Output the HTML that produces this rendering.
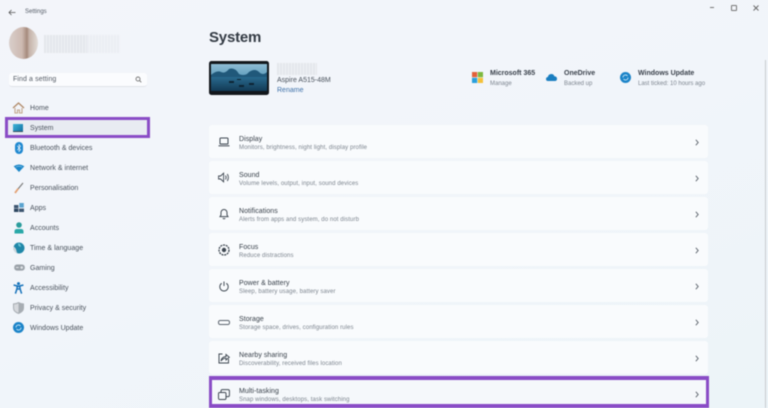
<!DOCTYPE html>
<html lang="en">
<head>
<meta charset="utf-8">
<title>Settings</title>
<style>
html,body{margin:0;padding:0}
body{width:768px;height:408px;overflow:hidden;position:relative;background:linear-gradient(160deg,#f3f5fa 0%,#f1f5fa 50%,#ecf4f8 100%);font-family:"Liberation Sans",sans-serif;color:#333a44}
#w{position:absolute;left:0;top:0;width:768px;height:408px;filter:blur(.5px)}
.t{position:absolute;white-space:nowrap;line-height:10px}
.card{position:absolute;left:209px;width:499px;height:33px;background:#f9fbfd;border-radius:3px}
.ct{font-size:7px;left:239px;color:#38404a;letter-spacing:.05px;margin-top:1px}
.cs{font-size:6px;left:239px;color:#7d858f;letter-spacing:.1px;margin-top:1px}
.nav{font-size:7px;left:30px;color:#4a525c;letter-spacing:.03px;margin-top:1px}
.ic{position:absolute;overflow:visible}
.chev{position:absolute;left:695px;width:4px;height:7px;margin-top:1px}
.box{position:absolute;border-style:solid;border-color:#8a4cc6;box-sizing:border-box}
.blur{position:absolute;background:repeating-linear-gradient(90deg,#e4e7ec 0 2px,#eff1f5 2px 3px)}
</style>
</head>
<body>
<div id="w">
<svg class="ic" style="left:8px;top:9px" width="8" height="7" viewBox="0 0 8 7" fill="none" stroke="#555" stroke-width=".8"><path d="M7.5 3.5H1M3.5 1 1 3.5 3.5 6"/></svg>
<div class="t" style="left:25px;top:7px;font-size:6px;color:#555d67">Settings</div>

<div style="position:absolute;left:9px;top:27px;width:29px;height:32px;border-radius:50%;background:linear-gradient(90deg,#d9cfcb 0%,#cdb9b1 45%,#a58a7c 62%,#c5b3a9 70%,#e2dcd8 100%)"></div>
<div class="blur" style="left:44px;top:35px;width:43px;height:18px"></div>
<div class="blur" style="left:87px;top:35px;width:33px;height:18px;opacity:.55"></div>

<div style="position:absolute;left:9px;top:73px;width:138px;height:13px;background:#fbfcfe;border-radius:3px;border-bottom:1px solid #dfe3e8"></div>
<div class="t" style="left:13px;top:75px;font-size:7px;color:#555c66;letter-spacing:.1px">Find a setting</div>
<svg class="ic" style="left:135px;top:76px" width="7" height="7" viewBox="0 0 7 7" fill="none" stroke="#777" stroke-width=".9"><circle cx="3" cy="3" r="2"/><path d="M4.5 4.5 6.3 6.3"/></svg>

<svg class="ic" style="left:12px;top:102px" width="13" height="12" viewBox="0 0 13 12"><path d="M1 6 6.5 1 12 6" fill="none" stroke="#b08a68" stroke-width="1.3"/><path d="M3 6v5h2.5V8h2v3H10V6" fill="none" stroke="#c2a68c" stroke-width="1.1"/></svg>
<div class="t nav" style="top:103px">Home</div>

<div class="box" style="left:5px;top:117px;width:145px;height:21px;border-width:3px;background:#e8ebf2"></div>
<div style="position:absolute;left:13px;top:124px;width:10px;height:7px;background:linear-gradient(135deg,#3fb5d8,#1473a5);border-bottom:1px solid #33505f"></div>
<div class="t nav" style="top:123px">System</div>

<svg class="ic" style="left:14px;top:142px" width="10" height="12" viewBox="0 0 10 12"><rect x="1" y="0" width="8" height="12" rx="4" fill="#1f88d0"/><path d="M3.2 3.8 6.6 7.8 5 9.5V2.5L6.6 4.2 3.2 8.2" fill="none" stroke="#fff" stroke-width=".6"/></svg>
<div class="t nav" style="top:143px">Bluetooth &amp; devices</div>

<svg class="ic" style="left:13px;top:164px" width="12" height="8" viewBox="0 0 12 9"><path d="M0 2.5Q6-1.5 12 2.5L6 9Z" fill="#1a86c8"/><path d="M2.5 3.5Q6 1.5 9.5 3.5" stroke="#d8eefa" stroke-width=".5" fill="none"/></svg>
<div class="t nav" style="top:163px">Network &amp; internet</div>

<svg class="ic" style="left:14px;top:182px" width="10" height="12" viewBox="0 0 10 12" fill="none"><path d="M9 1 4 7" stroke="#777" stroke-width="1.1"/><path d="M4.2 6.6 1 11" stroke="#e3a072" stroke-width="1.8"/></svg>
<div class="t nav" style="top:183px">Personalisation</div>

<svg class="ic" style="left:14px;top:203px" width="10" height="9" viewBox="0 0 10 9"><rect x="0" y="2" width="4.4" height="3.2" fill="#3d5570"/><rect x="0" y="5.6" width="4.4" height="3.4" fill="#2d4660"/><rect x="5" y="5.6" width="5" height="3.4" fill="#3d5570"/><rect x="5.3" y="0" width="4.5" height="4.6" fill="#5aa3cf"/></svg>
<div class="t nav" style="top:203px">Apps</div>

<svg class="ic" style="left:14px;top:222px" width="10" height="12" viewBox="0 0 10 12"><circle cx="5" cy="3" r="2.8" fill="#2b9c9c"/><path d="M0.5 11.5V9.5Q0.5 7 3 7H7Q9.5 7 9.5 9.5V11.5Z" fill="#29a8a8"/></svg>
<div class="t nav" style="top:223px">Accounts</div>

<svg class="ic" style="left:13px;top:242px" width="12" height="12" viewBox="0 0 12 12"><circle cx="6" cy="6" r="5.5" fill="#1f87a8"/><path d="M0.8 4.5Q3 6 3.5 9T6 11.5Q1 11.5.5 6Z" fill="#cfd6dc"/><path d="M5 1Q8 2 8 5L5.5 4Z" fill="#69c3d5"/></svg>
<div class="t nav" style="top:243px">Time &amp; language</div>

<svg class="ic" style="left:14px;top:264px" width="11" height="7" viewBox="0 0 12 8"><rect x="0" y="0.5" width="12" height="7" rx="3" fill="#9aa1a8"/><circle cx="8.5" cy="4" r="1.5" fill="#dfe3e7"/><rect x="2" y="3.4" width="3" height="1.2" fill="#dfe3e7"/></svg>
<div class="t nav" style="top:263px">Gaming</div>

<svg class="ic" style="left:13px;top:282px" width="11" height="12" viewBox="0 0 11 12"><circle cx="5.5" cy="1.6" r="1.5" fill="#1572ba"/><path d="M.6 3 5.5 4.4 10.4 3M4.3 4.4 3.9 7 2.4 11.6M6.7 4.4 7.1 7 8.6 11.6M4 7H7" fill="none" stroke="#1572ba" stroke-width="1.5"/></svg>
<div class="t nav" style="top:283px">Accessibility</div>

<svg class="ic" style="left:13px;top:302px" width="11" height="12" viewBox="0 0 11 12"><path d="M5.5 0Q8 1.5 11 1.5V6Q11 10 5.5 12 0 10 0 6V1.5Q3 1.5 5.5 0Z" fill="#a7adb3"/><path d="M5.5 1.2V10.8Q1 9.2 1 6V2.4Q3.5 2.4 5.5 1.2Z" fill="#d5d8dc"/></svg>
<div class="t nav" style="top:303px">Privacy &amp; security</div>

<svg class="ic" style="left:13px;top:322px" width="11" height="11" viewBox="0 0 11 11"><circle cx="5.5" cy="5.5" r="5.5" fill="#1c84c8"/><path d="M3 5.5A2.5 2.5 0 0 1 7.5 4M8 5.5A2.5 2.5 0 0 1 3.5 7" stroke="#d5ecfa" stroke-width=".8" fill="none"/></svg>
<div class="t nav" style="top:323px">Windows Update</div>

<div class="t" style="left:209px;top:29px;font-size:15px;line-height:17px;font-weight:700;color:#333a43;letter-spacing:-.2px">System</div>

<svg class="ic" style="left:209px;top:61px" width="60" height="34" viewBox="0 0 60 34">
<defs><linearGradient id="s" x1="0" y1="0" x2="0" y2="1"><stop offset="0" stop-color="#8fbdd4"/><stop offset=".38" stop-color="#6aa4c2"/><stop offset=".45" stop-color="#2b6d92"/><stop offset="1" stop-color="#123a55"/></linearGradient></defs>
<rect width="60" height="34" rx="2.5" fill="#13171c"/>
<rect x="2" y="3" width="56" height="27" fill="url(#s)"/>
<path d="M2 14Q8 9 12 11T20 8Q26 6 30 13 36 16 40 11 46 7 50 11T58 11V16H2Z" fill="#20587a"/>
<path d="M20 20h5v2h-5zM30 24h5v2h-5zM40 22h5v2h-5zM28 18h4v1h-4z" fill="#0d2434"/>
</svg>
<div class="blur" style="left:277px;top:63px;width:40px;height:12px"></div>
<div class="t" style="left:277px;top:75px;font-size:7px;color:#4a525c;margin-top:1px">Aspire A515-48M</div>
<div class="t" style="left:277px;top:85px;font-size:7px;color:#3d70a8;margin-top:1px">Rename</div>

<svg class="ic" style="left:472px;top:72px" width="11" height="11" viewBox="0 0 11 11"><rect width="5.2" height="5.2" fill="#e2603a"/><rect x="5.8" width="5.2" height="5.2" fill="#7eb83e"/><rect y="5.8" width="5.2" height="5.2" fill="#2aa0dc"/><rect x="5.8" y="5.8" width="5.2" height="5.2" fill="#f4c13a"/></svg>
<div class="t" style="left:490px;top:69px;font-size:7px;font-weight:700;color:#3a414b">Microsoft 365</div>
<div class="t" style="left:490px;top:79px;font-size:6px;color:#7d858f">Manage</div>

<svg class="ic" style="left:546px;top:73px" width="11" height="8" viewBox="0 0 11 8"><path d="M2 8Q0 8 0 6 0 4.2 1.8 4 2.5 1 5.3 1 7.6 1 8.4 3.2 11 3.4 11 5.8 11 8 9 8Z" fill="#1a7ec0"/></svg>
<div class="t" style="left:564px;top:69px;font-size:7px;font-weight:700;color:#3a414b">OneDrive</div>
<div class="t" style="left:564px;top:79px;font-size:6px;color:#7d858f">Backed up</div>

<svg class="ic" style="left:620px;top:72px" width="11" height="11" viewBox="0 0 11 11"><circle cx="5.5" cy="5.5" r="5.5" fill="#1c84c8"/><path d="M3 5.5A2.5 2.5 0 0 1 7.5 4M8 5.5A2.5 2.5 0 0 1 3.5 7" stroke="#d5ecfa" stroke-width=".8" fill="none"/></svg>
<div class="t" style="left:638px;top:69px;font-size:7px;font-weight:700;color:#3a414b">Windows Update</div>
<div class="t" style="left:638px;top:79px;font-size:6px;color:#7d858f">Last ticked: 10 hours ago</div>

<div style="position:absolute;left:710px;top:7px;width:4px;height:1px;background:#777"></div>
<div style="position:absolute;left:731px;top:5px;width:4px;height:4px;border:1px solid #777;border-radius:1px"></div>
<svg class="ic" style="left:753px;top:5px" width="6" height="6" viewBox="0 0 6 6" stroke="#666" stroke-width=".9"><path d="M.5.5 5.5 5.5M5.5.5.5 5.5"/></svg>
<div style="position:absolute;left:765px;top:60px;width:1px;height:348px;background:#c8ccd0"></div>

<div class="card" style="top:125px"></div>
<div class="card" style="top:161px"></div>
<div class="card" style="top:197px"></div>
<div class="card" style="top:233px"></div>
<div class="card" style="top:269px"></div>
<div class="card" style="top:305px"></div>
<div class="card" style="top:341px"></div>
<div class="box" style="left:209px;top:376px;width:500px;height:32px;border-width:4px 3px;background:#f5f8fb"></div>

<svg class="ic" style="left:218px;top:137px" width="12" height="10" viewBox="0 0 12 10" fill="none" stroke="#3d4650" stroke-width="1"><rect x="2" y="1" width="8" height="6" rx=".8"/><path d="M.5 8.8H11.5"/></svg>
<div class="t ct" style="top:134px">Display</div>
<div class="t cs" style="top:142px">Monitors, brightness, night light, display profile</div>

<svg class="ic" style="left:218px;top:172px" width="12" height="11" viewBox="0 0 12 11" fill="none" stroke="#3d4650" stroke-width=".9"><path d="M.6 4H2.6L5.6 1.2V9.8L2.6 7H.6Z"/><path d="M7.5 3.5Q8.7 5.5 7.5 7.5M9.3 2Q11.4 5.5 9.3 9"/></svg>
<div class="t ct" style="top:170px">Sound</div>
<div class="t cs" style="top:178px">Volume levels, output, input, sound devices</div>

<svg class="ic" style="left:219px;top:208px" width="10" height="12" viewBox="0 0 10 12" fill="none" stroke="#3d4650" stroke-width=".95"><path d="M1 8.6 2 7V4.5A3 3 0 0 1 8 4.5V7L9 8.6Z"/><path d="M3.8 10.2Q5 11.4 6.2 10.2"/></svg>
<div class="t ct" style="top:206px">Notifications</div>
<div class="t cs" style="top:214px">Alerts from apps and system, do not disturb</div>

<svg class="ic" style="left:218px;top:244px" width="12" height="12" viewBox="0 0 12 12" fill="none"><circle cx="6" cy="6" r="5" stroke="#3d4650" stroke-width="1.3" stroke-dasharray="2 .8"/><circle cx="6" cy="6" r="2.2" fill="#3d4650"/></svg>
<div class="t ct" style="top:242px">Focus</div>
<div class="t cs" style="top:250px">Reduce distractions</div>

<svg class="ic" style="left:219px;top:281px" width="10" height="11" viewBox="0 0 10 11" fill="none" stroke="#3d4650" stroke-width=".95"><path d="M5 .5V5"/><path d="M2.7 2.3A4.2 4.2 0 1 0 7.3 2.3"/></svg>
<div class="t ct" style="top:278px">Power &amp; battery</div>
<div class="t cs" style="top:286px">Sleep, battery usage, battery saver</div>

<svg class="ic" style="left:218px;top:320px" width="12" height="5" viewBox="0 0 12 5" fill="none" stroke="#5a636d" stroke-width="1"><rect x=".5" y=".5" width="11" height="4" rx="1.6"/></svg>
<div class="t ct" style="top:314px">Storage</div>
<div class="t cs" style="top:322px">Storage space, drives, configuration rules</div>

<svg class="ic" style="left:218px;top:352px" width="12" height="12" viewBox="0 0 12 12" fill="none" stroke="#3d4650" stroke-width=".95"><path d="M4.5 2H1V11H10.5V7"/><path d="M3 9Q3.5 5 8 4.5V2.5L11.3 5.3 8 8V6.2Q5 6.2 3 9Z"/></svg>
<div class="t ct" style="top:350px">Nearby sharing</div>
<div class="t cs" style="top:358px">Discoverability, received files location</div>

<svg class="ic" style="left:218px;top:389px" width="12" height="11" viewBox="0 0 12 11" fill="none" stroke="#3d4650" stroke-width=".95"><rect x=".5" y="3.5" width="7.5" height="7" rx="1.2"/><path d="M3 3.5V2Q3 .6 4.4 .6H10Q11.4.6 11.4 2V6.2Q11.4 7.6 10 7.6H8"/></svg>
<div class="t ct" style="top:386px">Multi-tasking</div>
<div class="t cs" style="top:394px">Snap windows, desktops, task switching</div>

<svg class="chev" style="top:138px" viewBox="0 0 5 9" fill="none" stroke="#5a616a" stroke-width="1.2"><path d="M1 1 4 4.5 1 8"/></svg>
<svg class="chev" style="top:174px" viewBox="0 0 5 9" fill="none" stroke="#5a616a" stroke-width="1.2"><path d="M1 1 4 4.5 1 8"/></svg>
<svg class="chev" style="top:210px" viewBox="0 0 5 9" fill="none" stroke="#5a616a" stroke-width="1.2"><path d="M1 1 4 4.5 1 8"/></svg>
<svg class="chev" style="top:246px" viewBox="0 0 5 9" fill="none" stroke="#5a616a" stroke-width="1.2"><path d="M1 1 4 4.5 1 8"/></svg>
<svg class="chev" style="top:282px" viewBox="0 0 5 9" fill="none" stroke="#5a616a" stroke-width="1.2"><path d="M1 1 4 4.5 1 8"/></svg>
<svg class="chev" style="top:318px" viewBox="0 0 5 9" fill="none" stroke="#5a616a" stroke-width="1.2"><path d="M1 1 4 4.5 1 8"/></svg>
<svg class="chev" style="top:354px" viewBox="0 0 5 9" fill="none" stroke="#5a616a" stroke-width="1.2"><path d="M1 1 4 4.5 1 8"/></svg>
<svg class="chev" style="top:390px" viewBox="0 0 5 9" fill="none" stroke="#5a616a" stroke-width="1.2"><path d="M1 1 4 4.5 1 8"/></svg>
</div>
</body>
</html>
